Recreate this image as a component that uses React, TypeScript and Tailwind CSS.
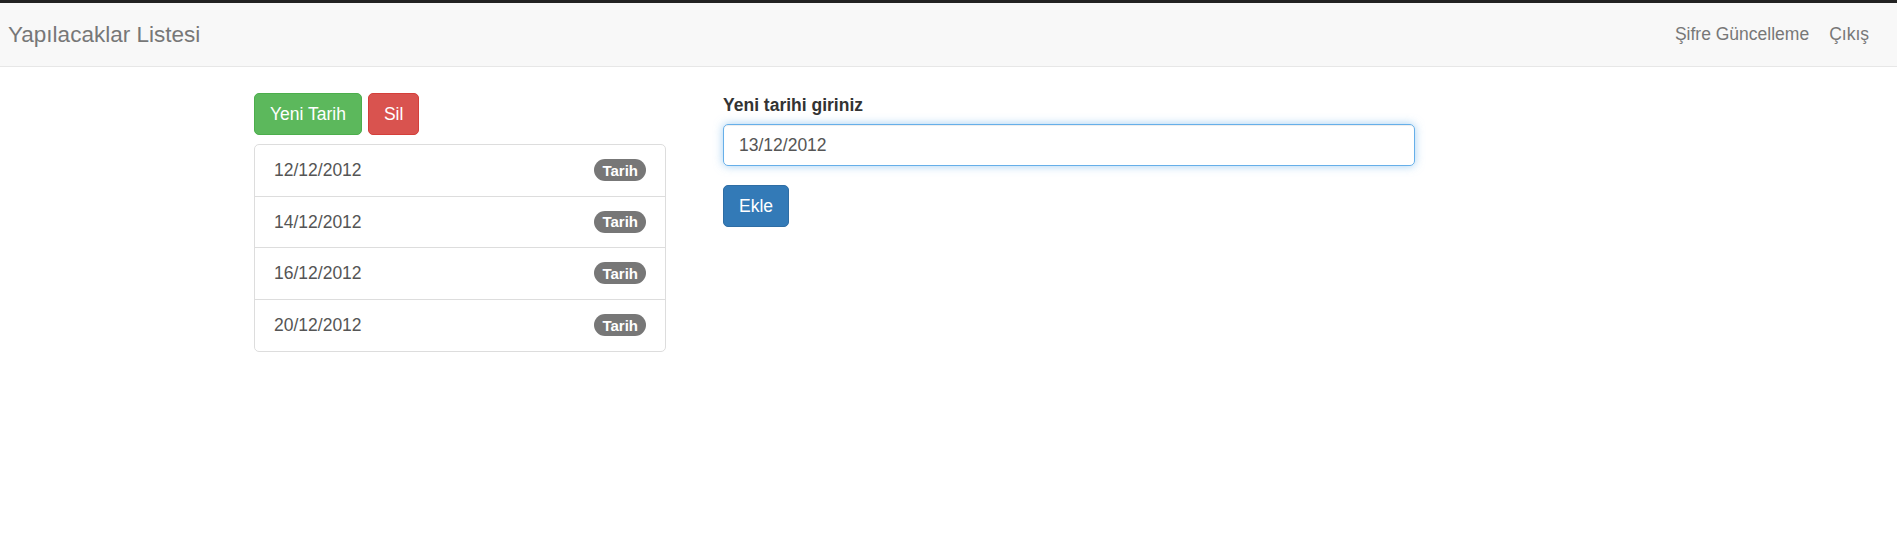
const dates = ["12/12/2012", "14/12/2012", "16/12/2012", "20/12/2012"];

export default function App() {
  return (
    <div className="min-h-screen bg-white font-['Liberation_Sans',Arial,sans-serif] text-[17.5px] text-[#333]">
      <div className="h-[3px] bg-[#222]" />
      <nav className="flex h-[64px] items-center justify-between border-b border-[#e7e7e7] bg-[#f8f8f8] pl-[8px] pr-[28px]">
        <span className="text-[22.5px] text-[#777]">Yapılacaklar Listesi</span>
        <div className="flex items-center gap-[20px] text-[#777]">
          <a href="#">Şifre Güncelleme</a>
          <a href="#">Çıkış</a>
        </div>
      </nav>

      <main className="flex gap-[57px] pl-[254px] pt-[26px]">
        <div className="w-[412px]">
          <div className="flex gap-[6px]">
            <button className="h-[42px] rounded-[5px] border border-[#4cae4c] bg-[#5cb85c] px-[15px] text-white">
              Yeni Tarih
            </button>
            <button className="h-[42px] rounded-[5px] border border-[#d43f3a] bg-[#d9534f] px-[15px] text-white">
              Sil
            </button>
          </div>
          <ul className="mt-[9px] divide-y divide-[#ddd] rounded-[5px] border border-[#ddd]">
            {dates.map((d) => (
              <li key={d} className="flex h-[51.5px] items-center justify-between px-[19px] text-[#555]">
                <span>{d}</span>
                <span className="flex h-[22px] items-center rounded-full bg-[#777] px-[8px] text-[15px] font-bold leading-none text-white">
                  Tarih
                </span>
              </li>
            ))}
          </ul>
        </div>

        <div className="w-[692px]">
          <label className="mb-[6px] block font-bold leading-[25px]">Yeni tarihi giriniz</label>
          <input
            readOnly
            value="13/12/2012"
            className="block h-[42px] w-full rounded-[5px] border border-[#66afe9] px-[15px] text-[#555] shadow-[inset_0_1px_1px_rgba(0,0,0,0.075),0_0_10px_rgba(102,175,233,0.6)] outline-none"
          />
          <button className="mt-[19px] h-[42px] rounded-[5px] border border-[#2e6da4] bg-[#337ab7] px-[15px] text-white">
            Ekle
          </button>
        </div>
      </main>
    </div>
  );
}
